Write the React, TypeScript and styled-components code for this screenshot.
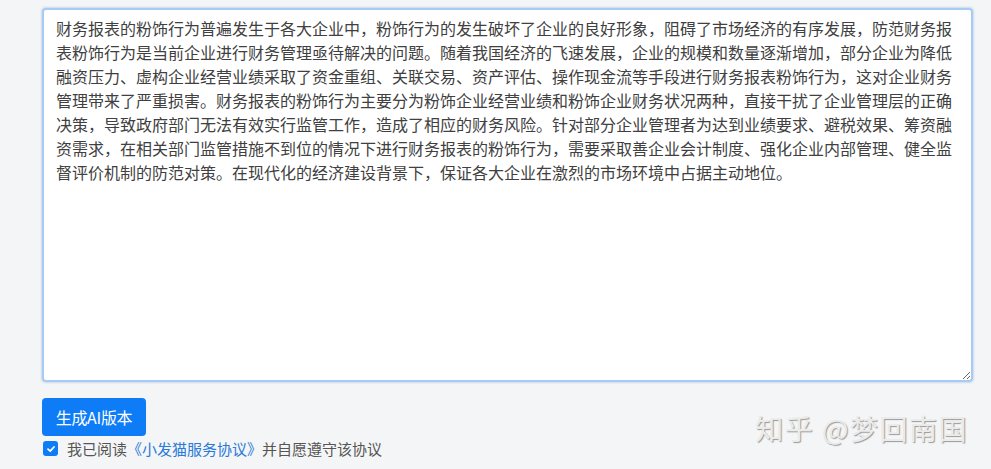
import { useEffect, useRef, useState } from "react";
import styled, { createGlobalStyle } from "styled-components";

const text =
  "财务报表的粉饰行为普遍发生于各大企业中，粉饰行为的发生破坏了企业的良好形象，阻碍了市场经济的有序发展，防范财务报表粉饰行为是当前企业进行财务管理亟待解决的问题。随着我国经济的飞速发展，企业的规模和数量逐渐增加，部分企业为降低融资压力、虚构企业经营业绩采取了资金重组、关联交易、资产评估、操作现金流等手段进行财务报表粉饰行为，这对企业财务管理带来了严重损害。财务报表的粉饰行为主要分为粉饰企业经营业绩和粉饰企业财务状况两种，直接干扰了企业管理层的正确决策，导致政府部门无法有效实行监管工作，造成了相应的财务风险。针对部分企业管理者为达到业绩要求、避税效果、筹资融资需求，在相关部门监管措施不到位的情况下进行财务报表的粉饰行为，需要采取善企业会计制度、强化企业内部管理、健全监督评价机制的防范对策。在现代化的经济建设背景下，保证各大企业在激烈的市场环境中占据主动地位。";

const GlobalStyle = createGlobalStyle`
  html, body {
    margin: 0;
    padding: 0;
    background: #f4f5f6;
    font-family: "Noto Sans CJK SC", "Noto Sans", sans-serif;
  }
`;

export default function App() {
  const [value, setValue] = useState(text);
  const [agreed, setAgreed] = useState(true);
  const ref = useRef<HTMLTextAreaElement>(null);

  useEffect(() => {
    const el = ref.current;
    if (el) {
      el.focus();
      el.setSelectionRange(el.value.length, el.value.length);
    }
  }, []);

  return (
    <>
      <GlobalStyle />
      <Page>
        <Editor ref={ref} value={value} onChange={(e) => setValue(e.target.value)} spellCheck={false} />
        <GenerateButton>生成AI版本</GenerateButton>
        <Agreement>
          <Check checked={agreed} onClick={() => setAgreed(!agreed)}>
            {agreed && (
              <svg width="10" height="10" viewBox="0 0 10 10">
                <path d="M2 5.2 L4.2 7.2 L8 3" fill="none" stroke="#fff" strokeWidth="1.8" strokeLinecap="round" strokeLinejoin="round" />
              </svg>
            )}
          </Check>
          <span>
            我已阅读<a href="#">《小发猫服务协议》</a>并自愿遵守该协议
          </span>
        </Agreement>
        <Watermark>知乎 @梦回南国</Watermark>
      </Page>
    </>
  );
}

const Page = styled.div`
  position: relative;
  height: 469px;
  box-sizing: border-box;
  padding: 8px 18px 0 42px;
  overflow: hidden;
`;

const Editor = styled.textarea`
  display: block;
  box-sizing: border-box;
  width: 931px;
  height: 374px;
  margin: 0;
  padding: 6px 12px;
  border: 2px solid #a7cbf2;
  border-radius: 4px;
  box-shadow: 0 0 2px 1px rgba(120, 170, 230, 0.35);
  background: #fff;
  color: #404040;
  font-family: "Noto Sans CJK SC", sans-serif;
  font-size: 16px;
  line-height: 24px;
  resize: vertical;
  outline: none;
  caret-color: #333;
`;

const GenerateButton = styled.button`
  display: block;
  margin-top: 16px;
  width: 104px;
  height: 38px;
  padding: 0;
  border: none;
  border-radius: 4px;
  background: #0d7cf6;
  color: #fff;
  font-family: "Noto Sans CJK SC", sans-serif;
  font-size: 16px;
  letter-spacing: -0.3px;
  cursor: pointer;
`;

const Agreement = styled.div`
  display: flex;
  align-items: center;
  gap: 9px;
  margin-top: 3px;
  margin-left: 1px;
  font-size: 15px;
  line-height: 19px;
  color: #555;

  a {
    color: #2a7ad6;
    text-decoration: none;
  }
`;

const Check = styled.span<{ checked: boolean }>`
  display: inline-flex;
  align-items: center;
  justify-content: center;
  width: 15px;
  height: 15px;
  border-radius: 3px;
  background: ${(p) => (p.checked ? "#0d7cf6" : "#fff")};
  border: ${(p) => (p.checked ? "none" : "1px solid #bbb")};
  cursor: pointer;
`;

const Watermark = styled.div`
  position: absolute;
  right: 23px;
  top: 408px;
  font-family: "Noto Sans CJK SC", sans-serif;
  font-size: 28px;
  letter-spacing: 1.5px;
  color: #ebebeb;
  text-shadow: 1px 1px 1px #9a9a9a;
  pointer-events: none;
`;
